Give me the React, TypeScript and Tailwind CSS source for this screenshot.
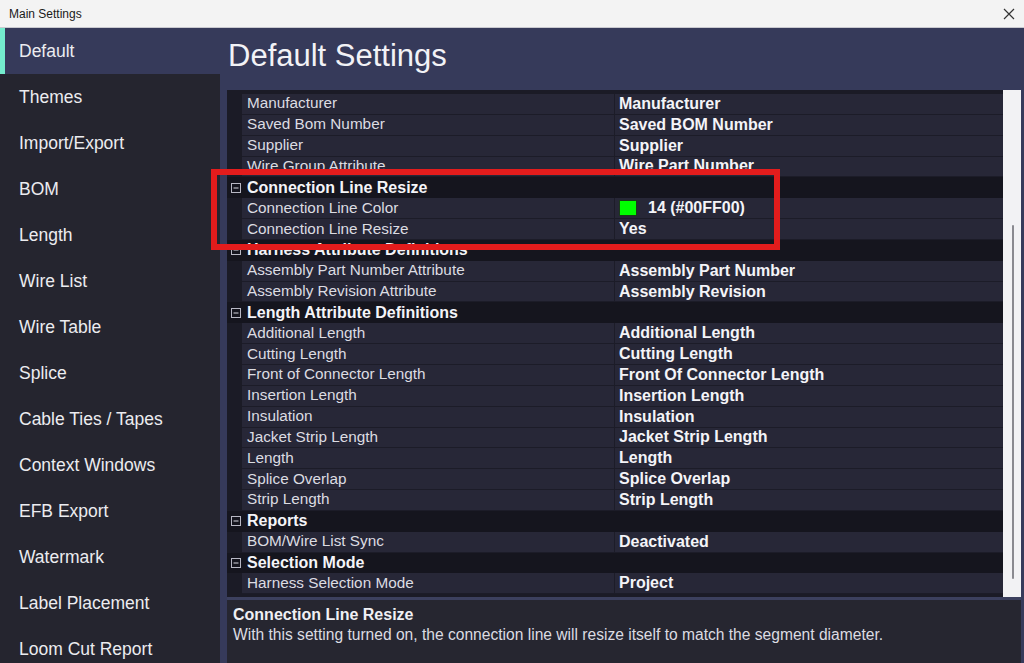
import React from "react";

type Row =
  | { kind: "cat"; label: string }
  | { kind: "prop"; name: string; value: string; swatch?: string };

const rows: Row[] = [
  { kind: "prop", name: "Manufacturer", value: "Manufacturer" },
  { kind: "prop", name: "Saved Bom Number", value: "Saved BOM Number" },
  { kind: "prop", name: "Supplier", value: "Supplier" },
  { kind: "prop", name: "Wire Group Attribute", value: "Wire Part Number" },
  { kind: "cat", label: "Connection Line Resize" },
  { kind: "prop", name: "Connection Line Color", value: "14 (#00FF00)", swatch: "#00ff00" },
  { kind: "prop", name: "Connection Line Resize", value: "Yes" },
  { kind: "cat", label: "Harness Attribute Definitions" },
  { kind: "prop", name: "Assembly Part Number Attribute", value: "Assembly Part Number" },
  { kind: "prop", name: "Assembly Revision Attribute", value: "Assembly Revision" },
  { kind: "cat", label: "Length Attribute Definitions" },
  { kind: "prop", name: "Additional Length", value: "Additional Length" },
  { kind: "prop", name: "Cutting Length", value: "Cutting Length" },
  { kind: "prop", name: "Front of Connector Length", value: "Front Of Connector Length" },
  { kind: "prop", name: "Insertion Length", value: "Insertion Length" },
  { kind: "prop", name: "Insulation", value: "Insulation" },
  { kind: "prop", name: "Jacket Strip Length", value: "Jacket Strip Length" },
  { kind: "prop", name: "Length", value: "Length" },
  { kind: "prop", name: "Splice Overlap", value: "Splice Overlap" },
  { kind: "prop", name: "Strip Length", value: "Strip Length" },
  { kind: "cat", label: "Reports" },
  { kind: "prop", name: "BOM/Wire List Sync", value: "Deactivated" },
  { kind: "cat", label: "Selection Mode" },
  { kind: "prop", name: "Harness Selection Mode", value: "Project" },
];

const nav = [
  "Default",
  "Themes",
  "Import/Export",
  "BOM",
  "Length",
  "Wire List",
  "Wire Table",
  "Splice",
  "Cable Ties / Tapes",
  "Context Windows",
  "EFB Export",
  "Watermark",
  "Label Placement",
  "Loom Cut Report",
];

function MinusBox() {
  return (
    <svg width="10" height="10" viewBox="0 0 10 10" className="shrink-0">
      <rect x="0.5" y="0.5" width="9" height="9" fill="none" stroke="#b8b8c4" strokeWidth="1" />
      <line x1="2.5" y1="5" x2="7.5" y2="5" stroke="#d8d8e0" strokeWidth="1" />
    </svg>
  );
}

export default function App() {
  return (
    <div
      className="relative w-[1024px] h-[663px] overflow-hidden flex flex-col bg-[#363a5a]"
      style={{ fontFamily: '"Liberation Sans", Arial, sans-serif' }}
    >
      {/* Title bar */}
      <div className="h-[28px] shrink-0 bg-[#f3f3f3] border-b border-[#c9c9cf] flex items-center justify-between pl-[9px] pr-[8px]">
        <span className="text-[12px] text-[#1a1a1a]">Main Settings</span>
        <svg width="12" height="12" viewBox="0 0 12 12" className="mr-[1px]">
          <path d="M1 1 L11 11 M11 1 L1 11" stroke="#333" strokeWidth="1.2" />
        </svg>
      </div>

      <div className="flex flex-1 min-h-0">
        {/* Sidebar */}
        <div className="w-[220px] shrink-0 bg-[#25252f] flex flex-col overflow-hidden">
          {nav.map((n, i) => (
            <div
              key={n}
              className={
                i === 0
                  ? "h-[46px] shrink-0 flex items-center bg-[#363a5a] border-l-[5px] border-[#74eccd] pl-[14px] text-[17.5px] text-[#ececf0] whitespace-nowrap"
                  : "h-[46px] shrink-0 flex items-center pl-[19px] text-[17.5px] text-[#ececf0] whitespace-nowrap"
              }
            >
              {n}
            </div>
          ))}
        </div>

        {/* Content */}
        <div className="flex-1 flex flex-col pl-[7px] pr-[3px] min-w-0">
          <div className="h-[62px] shrink-0 flex items-center pl-[1px] pb-[6px]">
            <span className="text-[31px] text-[#f2f2f6]">Default Settings</span>
          </div>

          <div className="h-[507px] shrink-0 flex bg-[#1b1b26]">
            <div className="flex-1 flex flex-col pt-[4px] overflow-hidden">
              {rows.map((r, i) =>
                r.kind === "cat" ? (
                  <div key={i} className="h-[20.85px] shrink-0 flex items-center bg-[#15151e]">
                    <div className="w-[15px] flex justify-center pl-[2px]">
                      <MinusBox />
                    </div>
                    <span className="pl-[5px] text-[16px] font-bold text-[#f4f4f8] whitespace-nowrap">{r.label}</span>
                  </div>
                ) : (
                  <div key={i} className="h-[20.85px] shrink-0 flex">
                    <div className="w-[15px] shrink-0 bg-[#1b1b26]" />
                    <div className="w-[373px] shrink-0 flex items-center pl-[5px] bg-[#272737] border-b border-r border-[#1c1c28] text-[15.3px] text-[#dcdce2] whitespace-nowrap">
                      {r.name}
                    </div>
                    <div className="flex-1 flex items-center pl-[4px] bg-[#272737] border-b border-[#1c1c28] text-[16px] font-bold text-[#f4f4f8] whitespace-nowrap">
                      {r.swatch && (
                        <span className="w-[18px] h-[16px] mr-[11px] border border-[#1a3a1a]" style={{ backgroundColor: r.swatch }} />
                      )}
                      {r.value}
                    </div>
                  </div>
                )
              )}
            </div>
            {/* Scrollbar */}
            <div className="w-[18px] shrink-0 bg-[#f2f2f4] flex justify-center pt-[135px] pb-[18px]">
              <div className="w-[2px] ml-[2px] bg-[#8a8a90] rounded-full" />
            </div>
          </div>

          <div className="h-[3px] shrink-0 bg-[#3c405e]" />

          <div className="flex-1 bg-[#262630] pl-[6px] pt-[4px]">
            <div className="text-[16px] font-bold text-[#f0f0f4] leading-[21px]">Connection Line Resize</div>
            <div className="text-[15.6px] text-[#dcdce2] leading-[20px] whitespace-nowrap">
              With this setting turned on, the connection line will resize itself to match the segment diameter.
            </div>
          </div>
        </div>
      </div>

      {/* Red annotation box */}
      <div className="absolute left-[211px] top-[169px] w-[569px] h-[81px] border-[6px] border-[#e31c1c] pointer-events-none" />
    </div>
  );
}
